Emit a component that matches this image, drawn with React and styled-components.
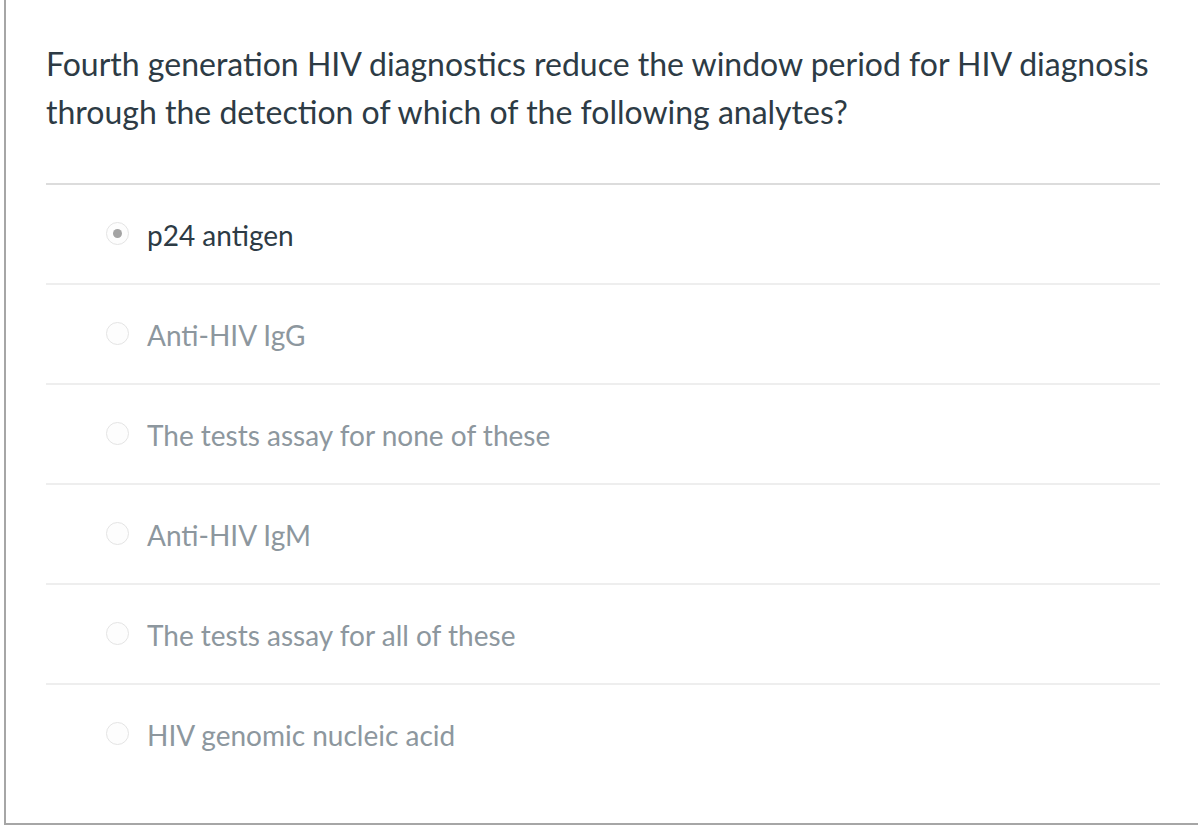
import styled, { createGlobalStyle } from "styled-components";

const GlobalStyle = createGlobalStyle`
  html, body {
    margin: 0;
    padding: 0;
    background: #fff;
  }
  body {
    font-family: Lato, "Open Sans", sans-serif;
  }
`;

const Page = styled.div`
  width: 1198px;
  height: 829px;
  box-sizing: border-box;
  padding: 0 0 4px 4px;
  background: #fff;
`;

const Frame = styled.div`
  height: 100%;
  box-sizing: border-box;
  border-left: 2px solid #a6a6a6;
  border-bottom: 2px solid #a6a6a6;
  padding: 40px 38px 0 40px;
`;

const Question = styled.div`
  font-family: Lato, sans-serif;
  font-size: 32px;
  line-height: 48px;
  color: #2d3b45;
  padding-bottom: 47px;
  border-bottom: 2px solid #dcdcdc;
`;

const Answers = styled.div`
  display: flex;
  flex-direction: column;
`;

const Answer = styled.label`
  height: ${(p) => (p.$first ? "98px" : "100px")};
  display: flex;
  align-items: center;
  gap: 18px;
  padding-left: 60px;
  box-sizing: border-box;
  border-top: ${(p) => (p.$first ? "none" : "2px solid #eeeeee")};
  font-family: Lato, sans-serif;
  font-size: 28px;
  color: ${(p) => (p.$selected ? "#2d3b45" : "#8d979e")};
`;

const Radio = styled.span`
  width: 21px;
  height: 21px;
  border-radius: 50%;
  border: 1px solid #e4e4e4;
  background: #fdfdfd;
  display: flex;
  align-items: center;
  justify-content: center;
  flex: none;
  margin-top: -2px;

  &::after {
    content: "";
    width: 9px;
    height: 9px;
    border-radius: 50%;
    background: ${(p) => (p.$selected ? "#a3a3a3" : "transparent")};
  }
`;

const Text = styled.span`
  margin-top: 2px;
`;

const answers = [
  "p24 antigen",
  "Anti-HIV IgG",
  "The tests assay for none of these",
  "Anti-HIV IgM",
  "The tests assay for all of these",
  "HIV genomic nucleic acid",
];

export default function App() {
  return (
    <>
      <GlobalStyle />
      <Page>
        <Frame>
          <Question>
            Fourth generation HIV diagnostics reduce the window period for HIV
            diagnosis through the detection of which of the following analytes?
          </Question>
          <Answers>
            {answers.map((a, i) => (
              <Answer key={a} $first={i === 0} $selected={i === 0}>
                <Radio $selected={i === 0} />
                <Text>{a}</Text>
              </Answer>
            ))}
          </Answers>
        </Frame>
      </Page>
    </>
  );
}
